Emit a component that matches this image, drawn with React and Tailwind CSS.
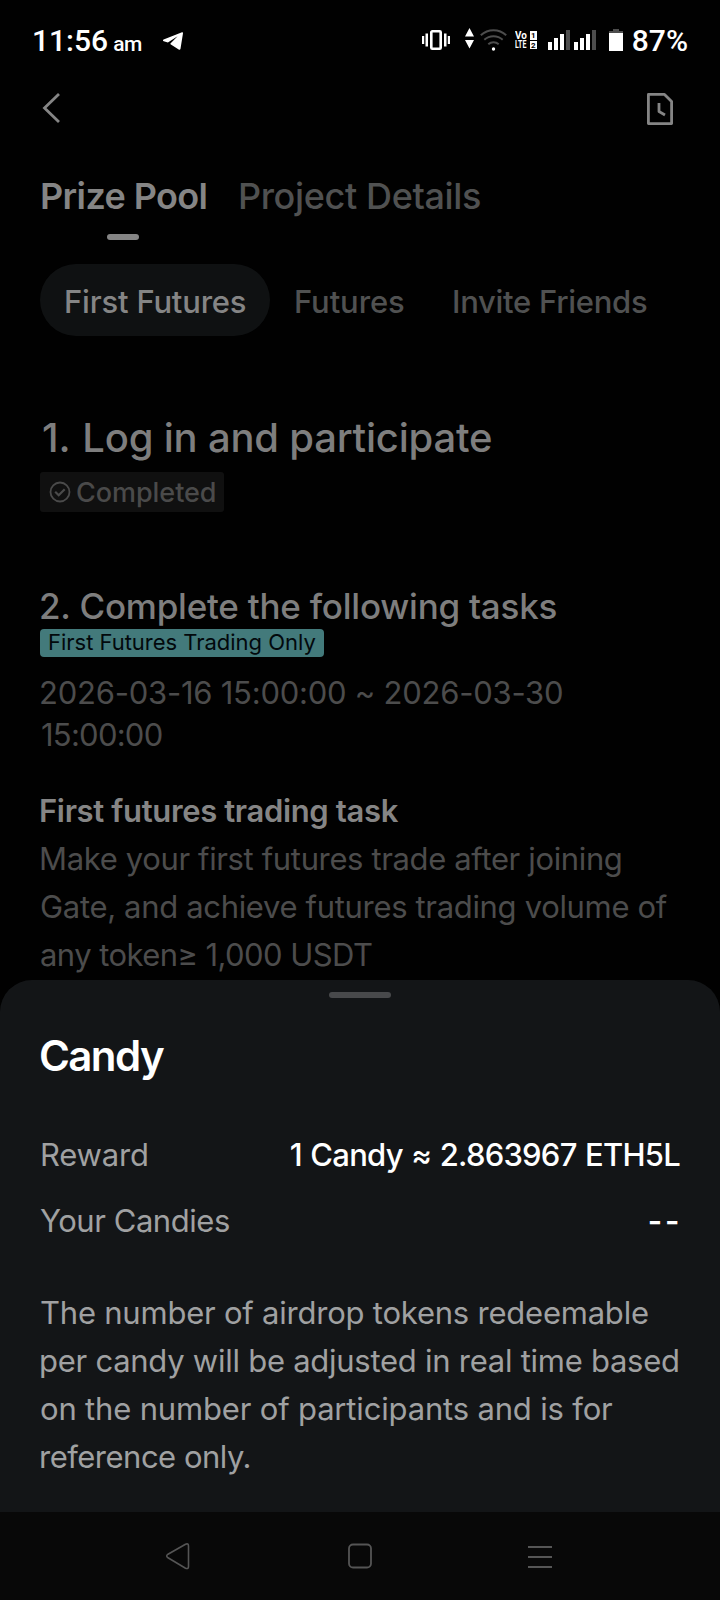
function SignalBars() {
  return (
    <svg className="block h-5 w-[22px]" viewBox="0 0 22 20">
      <rect x="0" y="12" width="4" height="8" fill="#fff" />
      <rect x="6" y="8" width="4" height="12" fill="#fff" />
      <rect x="12" y="4" width="4" height="16" fill="#fff" />
      <rect x="18" y="0" width="4" height="20" fill="#4d4d4d" />
    </svg>
  );
}

function StatusBar() {
  return (
    <header className="flex h-20 items-start pl-8 pr-[32px] pt-5 font-[Roboto,sans-serif] font-medium text-white">
      <div className="flex items-baseline">
        <span className="text-[30px] leading-[42px]">11:56</span>
        <span className="ml-[5px] text-[21px] leading-[42px] tracking-[-0.5px]">am</span>
      </div>
      <svg className="ml-[21px] mt-3 h-[18px] w-5" viewBox="0 0 20 18" fill="#fff">
        <path d="M19 0.2 0.6 7.600c-1 .5-.8 1.300.1 1.600l4.200 1.300L14.600 4.300 7.400 11.400l.1.9 8.200 5.300c.9.5 1.600.2 1.800-.8L20 1.200c.1-.9-.3-1.200-1-1Z" />
      </svg>
      <div className="ml-auto flex items-start">
        <svg className="mt-[10px] h-5 w-7" viewBox="0 0 28 20" fill="#fff">
          <rect x="9.300" y="1.300" width="9.400" height="17.400" rx="1" fill="none" stroke="#fff" strokeWidth="2.600" />
          <rect x="3.500" y="3.500" width="2.500" height="13" />
          <rect x="0" y="6" width="2.200" height="8" />
          <rect x="22" y="3.500" width="2.500" height="13" />
          <rect x="25.800" y="6" width="2.200" height="8" />
        </svg>
        <svg className="ml-[15px] mt-2 h-[21px] w-[9px]" viewBox="0 0 9 21" fill="#fff">
          <path d="M4.500 0 9 8.500H0ZM0 12h9l-4.500 8.500Z" />
        </svg>
        <svg className="ml-[6px] mt-[9px] h-[22px] w-[27px]" viewBox="0 0 27 22" fill="none" stroke="#4d4d4d" strokeWidth="2">
          <path d="M.8 6.200C8 -.4 19 -.4 26.200 6.200M4.300 10.800C9.500 6 17.500 6 22.700 10.800M8.300 15.300c3-2.700 7.400-2.700 10.400 0" />
          <circle cx="13.500" cy="20" r="1.700" fill="#fff" stroke="none" />
        </svg>
        <div className="ml-[8px] mt-[11px] grid h-[18px] w-[22px] grid-cols-[14px_7px] grid-rows-[9px_9px] gap-x-px text-[11px] font-bold leading-[9px]">
          <span className="w-[15px] origin-left scale-x-[0.9]">Vo</span>
          <span className="flex h-[9px] items-center justify-center bg-white text-[8px] text-black">1</span>
          <span className="w-[21px] origin-left scale-x-[0.64]">LTE</span>
          <span className="mt-px flex h-[8px] items-center justify-center bg-white text-[8px] text-black">2</span>
        </div>
        <div className="ml-[11px] mt-[10px] flex gap-1">
          <SignalBars />
          <SignalBars />
        </div>
        <svg className="ml-[13px] mt-[9px] h-[22px] w-[14px]" viewBox="0 0 14 22">
          <path d="M4 0h6v2h4v3H0V2h4Z" fill="#4d4d4d" />
          <rect y="4" width="14" height="18" fill="#fff" />
        </svg>
        <span className="ml-[9px] text-[30px] leading-[42px]">87%</span>
      </div>
    </header>
  );
}

function Header() {
  return (
    <div className="flex h-[92px] items-start justify-between pl-[42px] pr-[46px] pt-3">
      <svg className="h-8 w-5" viewBox="0 0 20 32" fill="none" stroke="#858585" strokeWidth="2.800">
        <path d="M17 2 2.500 16 17 30" />
      </svg>
      <svg className="h-[34px] w-7" viewBox="0 0 28 34" fill="none" stroke="#858585" strokeWidth="2.800">
        <path d="M2.400 2.400H18.500L25.600 9.500V31.600H2.400ZM13 11v8.500L19 23" strokeLinejoin="round" />
      </svg>
    </div>
  );
}

function Row({ label, labelClass, children }) {
  return (
    <div className="flex h-12 items-center justify-between leading-[48px]">
      <span className={labelClass}>{label}</span>
      {children}
    </div>
  );
}

export default function App() {
  return (
    <div className="flex h-[1600px] w-[720px] flex-col overflow-hidden whitespace-nowrap bg-[#010101] font-[Inter,sans-serif] text-[31px]">
      <StatusBar />
      <Header />

      <nav className="flex h-[92px] gap-[33px] pl-[39px] text-[36px] leading-[48px]">
        <div className="w-[166px]">
          <div className="pl-px font-semibold tracking-[-0.620px] text-[#858585]">Prize Pool</div>
          <div className="ml-[68px] mt-[14px] h-[6px] w-8 rounded-full bg-[#858585]" />
        </div>
        <div className="font-medium tracking-[-0.360px] text-[#505151]">Project Details</div>
      </nav>

      <div className="flex h-[72px] items-center pl-10 font-medium text-[#505151]">
        <div className="h-[72px] w-[230px] rounded-full bg-[#0f1112] pl-[24px] pt-0.5 leading-[72px] tracking-[-0.200px] text-[#858585]">
          First Futures
        </div>
        <div className="ml-6 w-[134px] pt-1 tracking-[-0.110px]">Futures</div>
        <div className="ml-[24px] pt-1 tracking-[-0.280px]">Invite Friends</div>
      </div>

      <main className="flex h-[644px] flex-col items-start pt-[74px] text-[#4c4c4c]">
        <h2 className="ml-[42px] text-[40px] font-medium leading-[56px] tracking-[-0.210px] text-[#7e7e7e]">
          1. <span className="ml-[2px]">Log in and participate</span>
        </h2>
        <div className="ml-10 mt-[6px] flex h-10 w-[184px] items-center rounded-[3px] bg-[#101010] pl-[9px] text-[27px] font-medium leading-10 text-[#4a4a4a]">
          <svg className="mr-[5px] h-[22px] w-[22px] shrink-0" viewBox="0 0 22 22" fill="none" stroke="#4a4a4a" strokeWidth="1.800">
            <circle cx="11" cy="11" r="9.500" />
            <path d="m6.200 10.800 3.500 3.500 6-6" strokeWidth="2.200" />
          </svg>
          <span className="pt-0.5 tracking-[-0.050px]">Completed</span>
        </div>

        <h3 className="ml-[39px] mt-[70px] text-[35px] font-medium leading-[48px] tracking-[-0.230px] text-[#7e7e7e]">
          2. Complete the following tasks
        </h3>
        <div className="-mt-px ml-10 h-7 w-[284px] rounded-[4px] bg-[#437a7b] pl-2 text-[22px] leading-[26px] tracking-[-0.020px] text-[#02090c]">
          First Futures Trading Only
        </div>
        <div className="ml-10 mt-[15px] leading-[42px]">
          <div className="-ml-px tracking-[-0.240px]">2026-03-16 15:00:00 ~ 2026-03-30</div>
          <div className="ml-px tracking-[-0.760px]">15:00:00</div>
        </div>

        <h4 className="ml-[39px] mt-[31px] font-semibold leading-[48px] tracking-[-0.350px] text-[#858585]">
          First futures trading task
        </h4>
        <div className="ml-10 leading-[48px]">
          <div className="-ml-px tracking-[-0.360px]">Make your first futures trade after joining</div>
          <div className="tracking-[-0.330px]">Gate, and achieve futures trading volume of</div>
          <div className="tracking-[-0.570px]">any token≥ 1,000 USDT</div>
        </div>
      </main>

      <section className="h-[532px] rounded-t-[32px] bg-[#131517] pl-[39px] pr-10 pt-3 text-[#a0a1a2]">
        <div className="mx-auto h-[6px] w-[62px] rounded-full bg-[#48494b]" />
        <h1 className="mt-[30px] text-[42px] font-semibold leading-[56px] tracking-[-1.600px] text-white">Candy</h1>
        <div className="mt-[47px]">
          <Row label="Reward" labelClass="ml-px tracking-[-0.200px]">
            <span className="font-medium tracking-[-0.760px] text-white [word-spacing:1px]">1 Candy ≈ 2.863967 ETH5L</span>
          </Row>
          <div className="h-[18px]" />
          <Row label="Your Candies" labelClass="ml-px tracking-[-0.450px]">
            <span className="-mr-0.5 font-semibold tracking-[2.670px] text-white">--</span>
          </Row>
        </div>
        <div className="ml-px mt-11 leading-[48px]">
          <div className="tracking-[-0.220px]">The number of airdrop tokens redeemable</div>
          <div className="-ml-px tracking-[-0.260px]">per candy will be adjusted in real time based</div>
          <div className="tracking-[-0.170px]">on the number of participants and is for</div>
          <div className="-ml-px tracking-[-0.500px]">reference only.</div>
        </div>
      </section>

      <footer className="flex h-[88px] items-start gap-[154px] bg-[#080808] pl-[165px] pt-[30px]">
        <svg className="h-7 w-[26px]" viewBox="0 0 26 28" fill="none" stroke="#555" strokeWidth="1.600">
          <path d="M20.500 2.200 3 12.200q-2.600 1.800 0 3.600L20.500 26.200q3 1.200 3-1.800V4q0-3-3-1.800Z" />
        </svg>
        <svg className="h-7 w-7" viewBox="0 0 28 28" fill="none" stroke="#555" strokeWidth="1.800">
          <rect x="4" y="2.500" width="22" height="23" rx="4" />
        </svg>
        <svg className="h-7 w-7" viewBox="0 0 28 28" fill="none" stroke="#555" strokeWidth="2">
          <path d="M1 5h24M1 15h24M1 25h24" />
        </svg>
      </footer>
    </div>
  );
}
